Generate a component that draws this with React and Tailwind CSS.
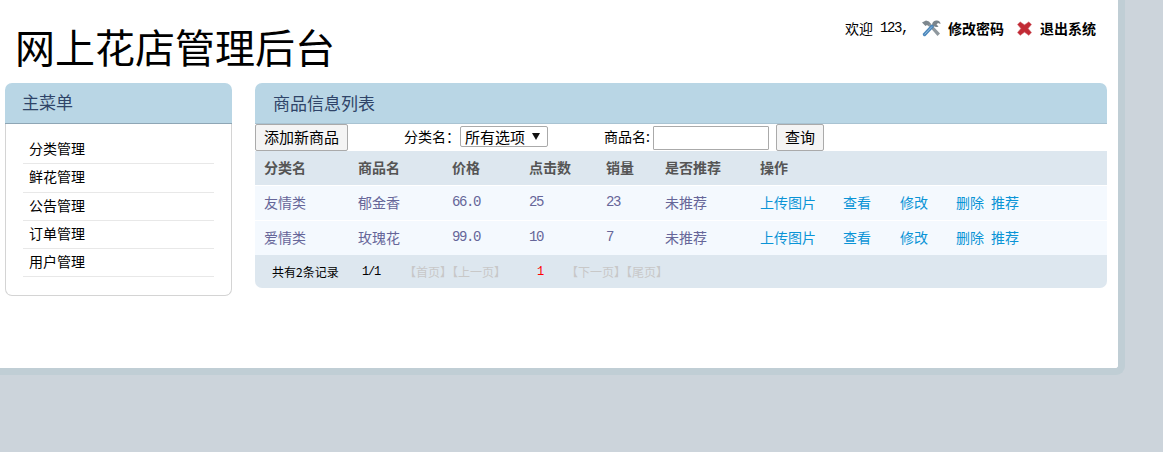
const cjk = { fontFamily: '"Noto Sans CJK SC", sans-serif' };
const mono = { fontFamily: '"Liberation Mono", monospace', fontSize: '14px', letterSpacing: '-1.4px' };
const monoSm = { fontFamily: '"Liberation Mono", monospace', fontSize: '12px', letterSpacing: '-1.2px' };

const menu = ['分类管理', '鲜花管理', '公告管理', '订单管理', '用户管理'];
const rows = [
  ['友情类', '郁金香', '66.0', '25', '23', '未推荐'],
  ['爱情类', '玫瑰花', '99.0', '10', '7', '未推荐'],
];

function Tools() {
  return (
    <svg width="20" height="17" viewBox="0 0 20 17" className="block shrink-0">
      <path d="M1 2.5 L5 0.5 L8 1.5 L10 4 L8 6.5 L6 5 L4.5 6 Z" fill="#7d878e" />
      <path d="M7 5 L9.5 3.5 L19 13.5 L16.5 16 Z" fill="#8f989e" />
      <path d="M15 0.5 C17.5 0 19.5 1.5 19.5 4 L17 3 L15.5 4.5 L17.5 6.5 C15.5 7.5 14 7 13 6.3 L11 8.5 L9 6.5 L11.2 4.6 C11 2.5 12.5 1 15 0.5 Z" fill="#7a848b" />
      <path d="M11 6.5 L3.5 14.5" stroke="#4a86bb" strokeWidth="3.4" strokeLinecap="round" />
      <path d="M11 6.5 L3.5 14.5" stroke="#9cc3e2" strokeWidth="0.9" />
    </svg>
  );
}

function Cross() {
  return (
    <svg width="15" height="15" viewBox="0 0 15 15" className="block shrink-0">
      <path d="M3.2 0.8 L7.5 3.8 L11.8 0.8 L14.6 3.4 L11.2 7.5 L14.6 11.6 L11.8 14.4 L7.5 11.2 L3.2 14.4 L0.4 11.6 L3.8 7.5 L0.4 3.4 Z" fill="#c22a35" stroke="#d98a90" strokeWidth="0.5" />
    </svg>
  );
}

export default function App() {
  return (
    <div className="h-[452px] w-[1163px] overflow-hidden bg-[#ccd4db] text-black" style={cjk}>
      <div className="h-[375px] w-[1125px] rounded-br-[9px] border-r-[7px] border-b-[7px] border-[#c0ced5] bg-white">
        <header className="flex h-[83px] justify-between">
          <h1 className="pt-[21px] pl-[15px] text-[40px] leading-[50px] font-normal">网上花店管理后台</h1>
          <div className="mt-[20px] flex h-[17px] items-center pr-[22px] text-[14px] leading-[17px]">
            <span>欢迎</span>
            <span className="ml-[7px]" style={mono}>123,</span>
            <span className="ml-[13px]"><Tools /></span>
            <a className="ml-[7px] font-bold">修改密码</a>
            <span className="ml-[13px]"><Cross /></span>
            <a className="ml-[8px] font-bold">退出系统</a>
          </div>
        </header>

        <div className="flex items-start pl-[5px]">
          <aside className="w-[227px]">
            <h2 className="flex h-[41px] items-center rounded-t-[7px] border-b border-[#8ea6b5] bg-[#b9d6e5] pb-[2px] pl-[17px] text-[17px] font-normal text-[#2f4468]">
              主菜单
            </h2>
            <ul className="h-[172px] rounded-b-[7px] border border-t-0 border-[#d4d4d4] px-[17px] pt-[12px] text-[14px]">
              {menu.map((item) => (
                <li key={item} className="h-[28.25px] border-b border-[#e8e8e8] pl-[6px] leading-[25px]">
                  {item}
                </li>
              ))}
            </ul>
          </aside>

          <main className="ml-[23px] w-[852px]">
            <h2 className="flex h-[41px] items-center rounded-t-[7px] border-b border-[#a9c3d2] bg-[#b9d6e5] pb-[1px] pl-[18px] text-[17px] font-normal text-[#2f4468]">
              商品信息列表
            </h2>
            <div className="flex h-[27px] items-start text-[14px]">
              <button className="h-[27px] w-[93px] rounded-[2px] border border-[#aaaaaa] bg-[#f4f4f4] text-[15px]">添加新商品</button>
              <span className="mt-[2px] ml-[56px] w-[56px]">分类名：</span>
              <div className="relative mt-[2px] h-[21px] w-[88px]">
                <select className="h-full w-full appearance-none rounded-[2px] border border-[#aaaaaa] bg-white pl-[4px] text-[15px] leading-[19px]">
                  <option>所有选项</option>
                </select>
                <svg width="8" height="7" viewBox="0 0 8 7" className="pointer-events-none absolute top-[7px] left-[72px]">
                  <path d="M0 0 H8 L4 7 Z" fill="#111" />
                </svg>
              </div>
              <span className="mt-[2px] ml-[56px] w-[49px]">商品名:</span>
              <input className="mt-[2px] h-[24px] w-[116px] rounded-[1px] border border-[#aaaaaa] bg-white" />
              <button className="ml-[7px] h-[27px] w-[48px] rounded-[2px] border border-[#aaaaaa] bg-[#f4f4f4] text-[15px]">查询</button>
            </div>

            <table className="w-[852px] table-fixed border-collapse text-[14px]">
              <colgroup>
                <col className="w-[94px]" />
                <col className="w-[94px]" />
                <col className="w-[77px]" />
                <col className="w-[77px]" />
                <col className="w-[59px]" />
                <col className="w-[95px]" />
                <col />
              </colgroup>
              <thead>
                <tr className="h-[34px] border-b border-white bg-[#dde7ef] text-[#555555]">
                  {['分类名', '商品名', '价格', '点击数', '销量', '是否推荐', '操作'].map((h) => (
                    <th key={h} className="pl-[9px] text-left font-bold">{h}</th>
                  ))}
                </tr>
              </thead>
              <tbody>
                {rows.map((r) => (
                  <tr key={r[0]} className="h-[35px] border-b border-white bg-[#f4f9fe] text-[#666699] last:border-b-0">
                    <td className="pl-[9px]">{r[0]}</td>
                    <td className="pl-[9px]">{r[1]}</td>
                    <td className="pl-[9px]" style={mono}>{r[2]}</td>
                    <td className="pl-[9px]" style={mono}>{r[3]}</td>
                    <td className="pl-[9px]" style={mono}>{r[4]}</td>
                    <td className="pl-[9px]">{r[5]}</td>
                    <td className="pl-[9px] text-[#0a94d6]">
                      <div className="flex">
                        <a className="w-[83px]">上传图片</a>
                        <a className="w-[57px]">查看</a>
                        <a className="w-[56px]">修改</a>
                        <a className="w-[35px]">删除</a>
                        <a>推荐</a>
                      </div>
                    </td>
                  </tr>
                ))}
              </tbody>
            </table>

            <div className="flex h-[33px] items-center rounded-b-[7px] bg-[#dde7ef] pl-[17px] text-[12px]">
              <span className="w-[90px]">共有2条记录</span>
              <span style={monoSm} className="w-[42px]">1/1</span>
              <span className="w-[133px] text-[#c8c8c8]">【首页】【上一页】</span>
              <span className="w-[29px] text-[#ff0000]" style={monoSm}>1</span>
              <span className="text-[#c8c8c8]">【下一页】【尾页】</span>
            </div>
          </main>
        </div>
      </div>
    </div>
  );
}
